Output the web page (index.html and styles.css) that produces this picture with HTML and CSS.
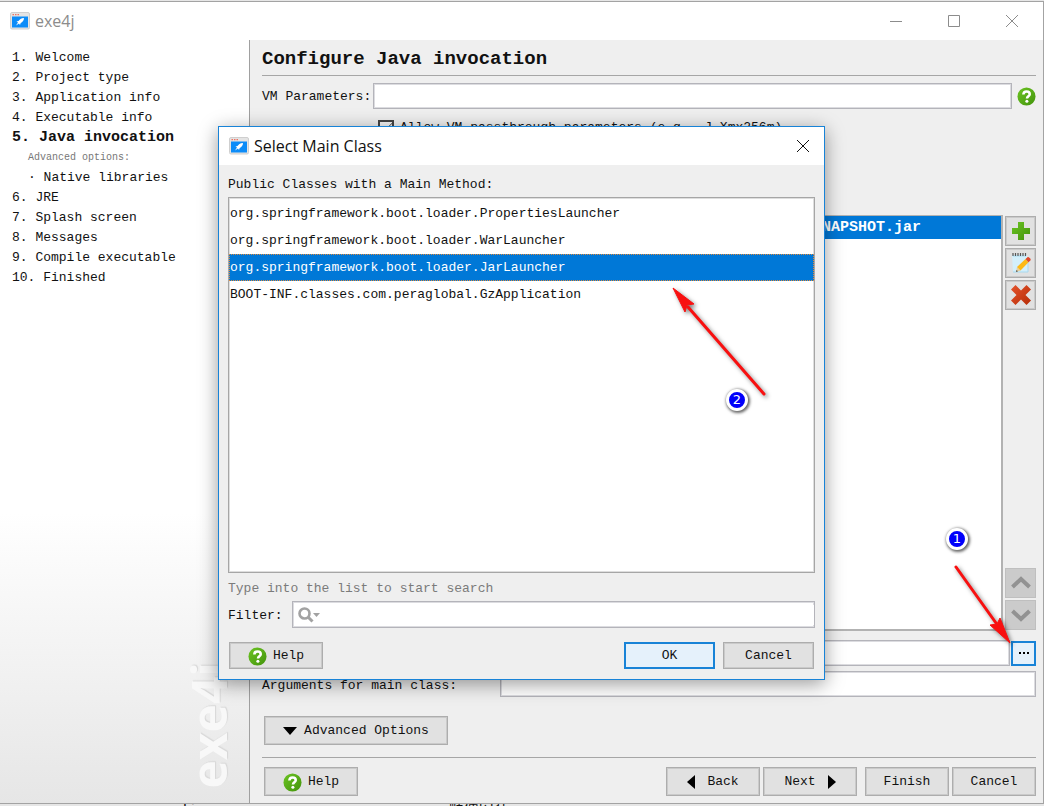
FILE: index.html
```html
<!DOCTYPE html>
<html lang="en">
<head>
    <meta charset="UTF-8">
    <meta name="viewport" content="width=device-width, initial-scale=1.0">
    <title>exe4j</title>
    <link rel="stylesheet" href="styles.css">
</head>
<body>
    <!-- Shared icons -->
    <svg class="sprite" aria-hidden="true">
        <defs>
            <linearGradient id="green" x1="0" y1="0" x2="1" y2="1">
                <stop offset="0" stop-color="#6cc423"/>
                <stop offset="1" stop-color="#43930c"/>
            </linearGradient>
            <linearGradient id="red" x1="0" y1="0" x2="1" y2="1">
                <stop offset="0" stop-color="#e5532c"/>
                <stop offset="1" stop-color="#b52c06"/>
            </linearGradient>
            <symbol id="app" viewBox="0 0 20 18">
                <rect x="0.5" y="0.5" width="19" height="16.5" rx="1.5" fill="#e4e4e4" stroke="#cfcfcf"/>
                <path d="M2.5 2.7h1.5M5 2.7h1.5M7.500 2.700h1.500" stroke="#ee7363" stroke-width="1.300"/>
                <rect x="2" y="4.500" width="16" height="11" fill="#0c8cf8"/>
                <path d="M14 6c-3 0-4.500 1.500-5.500 3l-2 .5 1.500 1-2 3 3-2 1 1.500.7-2c1.800-1 3.300-2.500 3.300-5z" fill="#fff"/>
            </symbol>
            <symbol id="help" viewBox="0 0 20 20">
                <circle cx="10" cy="10" r="9.500" fill="url(#green)"/>
                <path d="M6.700 7.900c.1-2.200 1.500-3.200 3.400-3.200s3.300 1 3.300 2.800c0 2.200-2.900 2.300-2.900 4.600" fill="none" stroke="#fff" stroke-width="2.700"/>
                <circle cx="10.400" cy="15" r="1.600" fill="#fff"/>
            </symbol>
        </defs>
    </svg>

    <div class="window">
        <header class="titlebar">
            <svg class="app-icon"><use href="#app"/></svg>
            <h1>exe4j</h1>
            <button class="win-btn" aria-label="Minimize"><svg viewBox="0 0 12 12"><path d="M0 6.500h12"/></svg></button>
            <button class="win-btn" aria-label="Maximize"><svg viewBox="0 0 12 12"><path d="M.5.5h11v11H.5z"/></svg></button>
            <button class="win-btn" aria-label="Close"><svg viewBox="0 0 12 12"><path d="M0 0l12 12M12 0L0 12"/></svg></button>
        </header>

        <div class="content">
            <nav class="sidebar">
                <ul class="steps">
                    <li>1. Welcome</li>
                    <li>2. Project type</li>
                    <li>3. Application info</li>
                    <li>4. Executable info</li>
                    <li class="current">5. Java invocation</li>
                    <li class="note">Advanced options:</li>
                    <li class="sub">&middot; Native libraries</li>
                    <li>6. JRE</li>
                    <li>7. Splash screen</li>
                    <li>8. Messages</li>
                    <li>9. Compile executable</li>
                    <li>10. Finished</li>
                </ul>
                <div class="brand">exe4j</div>
            </nav>

            <main class="panel">
                <h2>Configure Java invocation</h2>

                <div class="row vm-row">
                    <label for="vm">VM Parameters:</label>
                    <input type="text" id="vm" class="field">
                    <svg class="help-icon"><use href="#help"/></svg>
                </div>
                <div class="check-row">
                    <input type="checkbox" id="pass" checked>
                    <label for="pass">Allow VM passthrough parameters (e.g. -J-Xmx256m)</label>
                </div>

                <div class="classpath">
                    <ul class="jar-list">
                        <li>SNAPSHOT.jar</li>
                    </ul>
                    <div class="tools">
                        <button class="tool" aria-label="Add"><svg viewBox="0 0 20 20"><path d="M7 1h6v6h6v6h-6v6H7v-6H1V7h6z" fill="url(#green)"/></svg></button>
                        <button class="tool" aria-label="Edit">
                            <svg viewBox="0 0 20 20">
                                <path d="M1 2h15l1 17H2z" fill="#d3effb"/>
                                <path d="M2 3h13M2 19h15V9" fill="none" stroke="#a9d9ee"/>
                                <path d="M2 0v3M4.500 0v3M7 0v3M9.500 0v3M12 0v3M14.500 0v3" stroke="#555" stroke-width="1.200"/>
                                <path d="M5 19l1-5 3.500 3.500z" fill="#e9cf9b"/>
                                <path d="M5 19l.5-2 1.500 1.300z" fill="#444"/>
                                <path d="M6 14L14.500 6l3 3.300-8 8.200z" fill="#fdb916"/>
                                <path d="M14.500 6L16.500 4.200c1-.8 4 1.800 3 3.100l-2 2z" fill="#e2462a"/>
                            </svg>
                        </button>
                        <button class="tool" aria-label="Remove"><svg viewBox="0 0 20 20"><path d="M4.500 0L10 5.500 15.500 0 20 4.500 14.500 10l5.500 5.500-4.500 4.500L10 14.500 4.500 20 0 15.500 5.500 10 0 4.500z" fill="url(#red)"/></svg></button>
                        <button class="tool move up" disabled aria-label="Move up"><svg viewBox="0 0 20 20"><path d="M1.500 14L10 6l8.500 8"/></svg></button>
                        <button class="tool move" disabled aria-label="Move down"><svg viewBox="0 0 20 20"><path d="M1.500 6l8.500 8 8.500-8"/></svg></button>
                    </div>
                </div>

                <div class="row main-row">
                    <input type="text" class="field" aria-label="Main class">
                    <button class="browse" aria-label="Browse"><svg viewBox="0 0 10 2"><path d="M0 0h2v2H0zM4 0h2v2H4zM8 0h2v2H8z"/></svg></button>
                </div>
                <div class="row args-row">
                    <label for="args">Arguments for main class:</label>
                    <input type="text" id="args" class="field">
                </div>

                <button class="btn advanced"><svg class="tri" viewBox="0 0 14 8"><path d="M0 0h14L7 8z"/></svg>Advanced Options</button>

                <footer class="actions">
                    <button class="btn wide help-btn"><svg class="help-icon"><use href="#help"/></svg>Help</button>
                    <button class="btn wide back"><svg class="side" viewBox="0 0 8 14"><path d="M8 0v14L0 7z"/></svg>Back</button>
                    <button class="btn wide next">Next<svg class="side" viewBox="0 0 8 14"><path d="M0 0v14l8-7z"/></svg></button>
                    <button class="btn finish">Finish</button>
                    <button class="btn">Cancel</button>
                </footer>
            </main>
        </div>
    </div>

    <!-- Window behind, only its top edge is visible -->
    <div class="behind"><span>Linux</span><span lang="zh">顺便安装</span></div>

    <section class="dialog" role="dialog" aria-labelledby="dialog-title">
        <header class="dialog-title">
            <svg class="app-icon"><use href="#app"/></svg>
            <h2 id="dialog-title">Select Main Class</h2>
            <button class="win-btn" aria-label="Close"><svg viewBox="0 0 12 12"><path d="M0 0l12 12M12 0L0 12"/></svg></button>
        </header>
        <div class="dialog-body">
            <p id="classes-label">Public Classes with a Main Method:</p>
            <ul class="class-list" role="listbox" aria-labelledby="classes-label">
                <li role="option">org.springframework.boot.loader.PropertiesLauncher</li>
                <li role="option">org.springframework.boot.loader.WarLauncher</li>
                <li role="option" class="selected" aria-selected="true">org.springframework.boot.loader.JarLauncher</li>
                <li role="option">BOOT-INF.classes.com.peraglobal.GzApplication</li>
            </ul>
            <p class="hint">Type into the list to start search</p>
            <div class="filter">
                <label for="filter">Filter:</label>
                <div class="search">
                    <svg viewBox="0 0 22 16"><circle cx="6.500" cy="6.500" r="5" fill="none" stroke="#a2a2a2" stroke-width="2.600"/><path d="M10 10l4.500 4.500" stroke="#a2a2a2" stroke-width="3"/><path d="M15 6h7l-3.500 4z" fill="#a2a2a2"/></svg>
                    <input type="text" id="filter">
                </div>
            </div>
            <footer class="dialog-actions">
                <button class="btn help-btn"><svg class="help-icon"><use href="#help"/></svg>Help</button>
                <button class="btn primary">OK</button>
                <button class="btn">Cancel</button>
            </footer>
        </div>
    </section>

    <!-- Step markers -->
    <svg class="arrow arrow-one" viewBox="0 0 70 90"><path class="line" d="M6 6L46 62"/><path class="head" d="M60 82L40 64l7-1 3-6z"/></svg>
    <span class="marker marker-one">1</span>
    <svg class="arrow arrow-two" viewBox="0 0 110 120"><path class="line" d="M98 112L22 25"/><path class="head" d="M7 6l21 16-7 1-2 7z"/></svg>
    <span class="marker marker-two">2</span>
</body>
</html>
```
FILE: styles.css
```css
* {
    margin: 0;
    padding: 0;
    box-sizing: border-box;
}
body {
    position: relative;
    display: flex;
    flex-direction: column;
    height: 100vh;
    min-height: 700px;
    padding-top: 1px;
    background: #e6e6e6;
    color: #111;
    font: 13px/20px "Liberation Mono", monospace;
    overflow: hidden;
}
ul {
    list-style: none;
}
button, input {
    font: inherit;
    color: inherit;
}
.sprite {
    position: absolute;
    width: 0;
    height: 0;
}

/* Main window */
.window {
    flex: 1;
    min-height: 0;
    display: flex;
    flex-direction: column;
    border: 1px solid #a3a3a3;
    border-left: 0;
    background: #efefef;
}
.titlebar {
    display: flex;
    align-items: center;
    height: 38px;
    padding: 0 2px 0 10px;
    background: #fff;
}
.app-icon {
    width: 20px;
    height: 18px;
}
.titlebar h1, .dialog-title h2 {
    flex: 1;
    margin-left: 5px;
    font-family: "Open Sans", "Noto Sans", sans-serif;
    font-weight: normal;
    font-size: 16px;
}
.titlebar h1 {
    color: #8c8c8c;
}
.win-btn {
    width: 58px;
    height: 30px;
    border: 0;
    background: none;
}
.win-btn svg {
    display: block;
    width: 12px;
    height: 12px;
    margin: auto;
    fill: none;
    stroke: #8c8c8c;
}
.content {
    flex: 1;
    min-height: 0;
    display: flex;
}

/* Sidebar with the wizard steps */
.sidebar {
    display: flex;
    flex-direction: column;
    justify-content: space-between;
    width: 250px;
    padding: 8px 16px 14px 12px;
    border-right: 1px solid #a0a0a0;
    background: linear-gradient(#fff 62%, #e6e6e6);
}
.current {
    font-size: 15px;
    font-weight: bold;
}
.steps .note {
    padding-left: 16px;
    font-size: 10px;
    color: #777;
}
.steps .sub {
    padding-left: 16px;
}
.brand {
    align-self: flex-end;
    writing-mode: vertical-rl;
    transform: rotate(180deg);
    font: bold 48px/48px "Open Sans", sans-serif;
    color: #f8f8f8;
    text-shadow: 1px 1px 1px #d8d8d8;
}

/* Right panel */
.panel {
    flex: 1;
    display: flex;
    flex-direction: column;
    padding: 7px 7px 7px 12px;
}
.panel h2 {
    padding-bottom: 4px;
    border-bottom: 1px solid #a6a6a6;
    font-size: 19px;
    line-height: 24px;
}
.row {
    display: flex;
    align-items: center;
    flex-shrink: 0;
}
.field {
    flex: 1;
    height: 26px;
    padding: 0 4px;
    border: 1px solid #b4b4ba;
    background: #fff;
    box-shadow: inset 0 0 0 1px #dcdce0;
    outline: 0;
}
.help-icon {
    width: 19px;
    height: 19px;
}
.vm-row {
    margin-top: 7px;
}
.vm-row label {
    width: 111px;
}
.vm-row .help-icon {
    margin-left: 5px;
}
.row label {
    padding-top: 2px;
}
.check-row {
    display: flex;
    align-items: center;
    gap: 6px;
    margin: 9px 0 77px 116px;
}
.check-row input {
    appearance: none;
    width: 16px;
    height: 16px;
    border: 2px solid #444;
    background: linear-gradient(135deg, #f4f4f4 50%, #555 52%, #f4f4f4 62%);
}
.classpath {
    flex: 1;
    min-height: 0;
    display: flex;
    gap: 2px;
}
.jar-list {
    flex: 1;
    border: 2px solid #b2b2b2;
    border-top-width: 1px;
    background: #fff;
}
.jar-list li {
    height: 23px;
    padding-right: 80px;
    background: #0078d7;
    color: #fff;
    font-size: 15px;
    font-weight: bold;
    line-height: 24px;
    text-align: right;
}
.tools {
    display: flex;
    flex-direction: column;
    gap: 2px;
    padding: 1px 0;
}
.tool {
    display: flex;
    align-items: center;
    justify-content: center;
    width: 31px;
    height: 30px;
    border: 1px solid #adadad;
    background: #e1e1e1;
    box-shadow: inset 0 0 0 1px #cacaca;
}
.tool svg {
    width: 20px;
    height: 20px;
}
.tool.up {
    margin-top: auto;
}
.tool.move {
    border-color: #bfbfbf;
    background: #cbcbcb;
    box-shadow: none;
}
.move path {
    fill: none;
    stroke: #929292;
    stroke-width: 4;
}
.main-row {
    gap: 1px;
    margin-top: 9px;
}
.browse {
    display: flex;
    align-items: center;
    justify-content: center;
    width: 25px;
    height: 25px;
    border: 2px solid #1883d7;
    background: #e5f1fb;
}
.browse svg {
    width: 10px;
    height: 2px;
}
.args-row {
    margin-top: 5px;
}
.args-row label {
    width: 238px;
    padding-top: 4px;
}
.btn {
    display: inline-flex;
    align-items: center;
    justify-content: center;
    gap: 6px;
    width: 84px;
    height: 29px;
    padding-top: 1px;
    flex-shrink: 0;
    border: 1px solid #adadad;
    background: #e1e1e1;
    box-shadow: inset 0 0 0 1px #cacaca;
}
.btn.wide {
    width: 94px;
}
.btn.advanced {
    gap: 7px;
    width: 184px;
    margin: 19px 0 12px 2px;
}
.tri {
    width: 14px;
    height: 8px;
}
.side {
    width: 8px;
    height: 14px;
}
.actions {
    display: flex;
    gap: 3px;
    padding: 9px 0 0 2px;
    border-top: 1px solid #a6a6a6;
}
.actions .back {
    gap: 12px;
    margin-left: auto;
}
.actions .next {
    gap: 12px;
}
.actions .finish {
    margin-left: 5px;
}

/* Strip under the window */
.behind {
    display: flex;
    gap: 230px;
    height: 2px;
    padding-left: 183px;
    overflow: hidden;
    font: 15px/10px "Liberation Sans", "Noto Sans CJK SC", sans-serif;
}

/* Dialog */
.dialog {
    position: absolute;
    inset: 126px 219px 126px 218px;
    display: flex;
    flex-direction: column;
    border: 1px solid #1883d7;
    background: #efefef;
    box-shadow: 0 4px 18px rgba(0, 0, 0, 0.4);
}
.dialog-title {
    display: flex;
    align-items: center;
    height: 38px;
    padding-left: 10px;
    background: #fff;
}
.dialog-title .win-btn {
    width: 42px;
}
.dialog-title .win-btn svg {
    stroke: #111;
}
.dialog-body {
    flex: 1;
    min-height: 0;
    display: flex;
    flex-direction: column;
    padding: 10px 9px 10px 9px;
}
.class-list {
    flex: 1;
    margin-top: 2px;
    padding-top: 2px;
    border: 1px solid #a6a6a6;
    background: #fff;
    box-shadow: inset 0 0 0 1px #dedede;
}
.class-list li {
    height: 27px;
    border: 1px solid transparent;
    line-height: 25px;
}
.class-list .selected {
    border: 1px dotted #e08a3c;
    background: #0078d7;
    color: #fff;
}
.hint {
    margin-top: 6px;
    color: #7b7b7b;
}
.filter {
    display: flex;
    align-items: center;
    margin-top: 2px;
}
.filter label {
    width: 64px;
    padding-top: 2px;
}
.search {
    flex: 1;
    display: flex;
    align-items: center;
    height: 27px;
    padding-left: 5px;
    border: 1px solid #b4b4ba;
    background: #fff;
    box-shadow: inset 0 0 0 1px #dcdce0;
}
.search svg {
    width: 22px;
    height: 16px;
}
.search input {
    flex: 1;
    height: 20px;
    border: 0;
    outline: 0;
}
.dialog-actions {
    display: flex;
    gap: 8px;
    margin-top: 14px;
    padding: 0 1px;
}
.dialog-actions .btn {
    width: 91px;
    height: 27px;
}
.dialog-actions .help-btn {
    width: 94px;
    margin-right: auto;
}
.dialog-actions .primary {
    border: 2px solid #1883d7;
    background: #e5f1fb;
    box-shadow: none;
}

/* Numbered markers and arrows laid over the windows */
.arrow {
    position: absolute;
    filter: drop-shadow(2px 2px 2px rgba(0, 0, 0, 0.5));
}
.arrow .line {
    stroke: #f81010;
    stroke-width: 3;
    stroke-linecap: round;
}
.arrow .head {
    fill: #f81010;
    stroke: #f81010;
}
.arrow-one {
    left: 950px;
    top: 561px;
    width: 70px;
    height: 90px;
}
.arrow-two {
    left: 666px;
    top: 282px;
    width: 110px;
    height: 120px;
}
.marker {
    position: absolute;
    width: 22px;
    height: 22px;
    border: 3px solid #fff;
    border-radius: 50%;
    background: #0000fb;
    box-shadow: 1px 1px 3px 1px rgba(0, 0, 0, 0.6);
    color: #fff;
    font: 13px/16px "DejaVu Sans", sans-serif;
    text-align: center;
}
.marker-one {
    left: 946px;
    top: 528px;
}
.marker-two {
    left: 726px;
    top: 389px;
}
```
